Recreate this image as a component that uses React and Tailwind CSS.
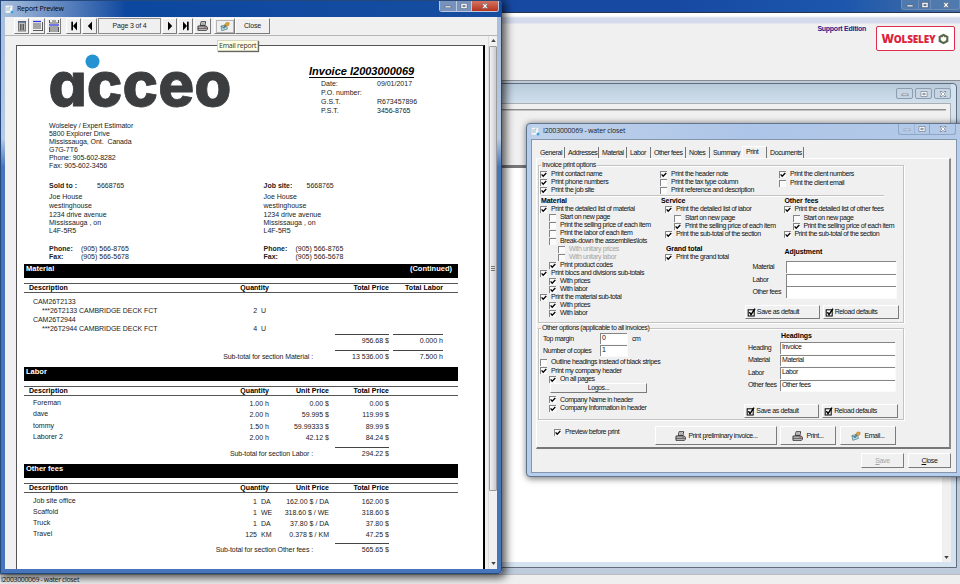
import { clsx } from 'clsx';

const material = [
  { label: 'Print the detailed list of material', on: true },
  { label: 'Start on new page', level: 1 },
  { label: 'Print the selling price of each item', level: 1 },
  { label: 'Print the labor of each item', level: 1 },
  { label: 'Break-down the assemblies\\lots', level: 1 },
  { label: 'With unitary prices', level: 2, disabled: true },
  { label: 'With unitary labor', level: 2, disabled: true },
  { label: 'Print product codes', level: 1, on: true },
  { label: 'Print blocs and divisions sub-totals', on: true },
  { label: 'With prices', level: 1, on: true },
  { label: 'With labor', level: 1, on: true },
  { label: 'Print the material sub-total', on: true },
  { label: 'With prices', level: 1, on: true },
  { label: 'With labor', level: 1, on: true },
];

const tabs = [
  ['General', 'w-[28px]'],
  ['Addresses', 'w-[34px]'],
  ['Material', 'w-[28px]'],
  ['Labor', 'w-[24px]'],
  ['Other fees', 'w-[35px]'],
  ['Notes', 'w-[24px]'],
  ['Summary', 'w-[32px]'],
  ['Print', 'w-[25px]'],
  ['Documents', 'w-[37px]'],
];

const labor = [
  ['Foreman', '1.00 h', '0.00 $', '0.00 $'],
  ['dave', '2.00 h', '59.995 $', '119.99 $'],
  ['tommy', '1.50 h', '59.99333 $', '89.99 $'],
  ['Laborer 2', '2.00 h', '42.12 $', '84.24 $'],
];

const fees = [
  ['Job site office', '1', 'DA', '162.00 $ / DA', '162.00 $'],
  ['Scaffold', '1', 'WE', '318.60 $ / WE', '318.60 $'],
  ['Truck', '1', 'DA', '37.80 $ / DA', '37.80 $'],
  ['Travel', '125', 'KM', '0.378 $ / KM', '47.25 $'],
];

/* ── icons ── */

function PrinterIcon({ className }) {
  return (
    <svg viewBox="0 0 12 11" className={className}>
      <path d="M3.5 5 L4.5 0.7 H9.5 L8.7 5 Z" fill="#fff" stroke="#222" strokeWidth="0.9" />
      <path d="M5 2.2 H8.4 M4.7 3.6 H8" stroke="#444" strokeWidth="0.7" />
      <path d="M1 5.5 H10.2 L11.4 7 V9 L10.4 10.3 H1 Z" fill="#c9c9c9" stroke="#222" strokeWidth="0.9" />
      <path d="M1 8 H10.8" stroke="#222" strokeWidth="0.8" />
      <rect x="8" y="6.3" width="1.8" height="0.9" fill="#b03030" />
    </svg>
  );
}

function EmailIcon({ className }) {
  return (
    <svg viewBox="0 0 11 11" className={className}>
      <path d="M1 5 L7 3.6 L8.2 8.2 L2 10.2 Z" fill="#b9dbe2" stroke="#4d7f8c" strokeWidth="0.8" />
      <path d="M1.2 5.2 L5 7.3 L7 3.8" fill="none" stroke="#356a78" strokeWidth="0.8" />
      <path d="M4.5 4.5 L7 1 L10 1.4 L9.8 4 L6.7 5.4 Z" fill="#dfa23c" stroke="#976a20" strokeWidth="0.5" />
      <path d="M3.4 7.2 L6.4 4" stroke="#42798a" strokeWidth="1.2" />
    </svg>
  );
}

function AppIcon() {
  return (
    <svg viewBox="0 0 9 9" className="h-[9px] w-[9px] shrink-0">
      <rect x="0.4" y="0.4" width="7.2" height="7.6" rx="1" fill="#f4f8fb" stroke="#b9cddd" strokeWidth="0.6" />
      <path d="M2 2.2 V6 M4 2.2 H5.5 M4 2.2 V6" stroke="#8ba5b9" strokeWidth="0.8" />
      <circle cx="7" cy="7" r="1.5" fill="#35a5de" />
    </svg>
  );
}

function SheetIcon({ kind }) {
  return (
    <svg viewBox="0 0 12 12" className="h-[12px] w-[12px]" fill="none" stroke="#333" strokeWidth="1">
      {kind === 'page' && (
        <>
          <rect x="2.5" y="1.5" width="7" height="9.5" fill="#bbb" stroke="#777" />
          <path d="M4.5 4 V10 M6 4 V10 M7.5 4 V10" strokeWidth="0.7" />
          <path d="M2 2 H10" stroke="#34498c" />
        </>
      )}
      {kind === 'wide' && (
        <>
          <path d="M1 1.5 H9" stroke="#2a35e0" strokeWidth="1.3" />
          <path d="M1 4 H9 M1 6 H9 M1 8 H9 M1 10.5 H11 M10.5 2 V11" strokeWidth="0.8" />
        </>
      )}
      {kind === 'break' && (
        <>
          <path d="M1.5 0 V3 H10.5 V0 M4 1 H8" strokeWidth="0.8" />
          <path d="M1 5 H11" stroke="#2a35e0" strokeWidth="1.3" />
          <path d="M1.5 7 H10.5 M1.5 9 H10.5 M1.5 11 H10.5 M1.5 7 V12 M10.5 7 V12" strokeWidth="0.8" />
        </>
      )}
    </svg>
  );
}

function NavIcon({ dir, bar }) {
  return (
    <svg viewBox="0 0 10 10" className={clsx('h-[10px] w-[10px]', dir === 'left' && '-scale-x-100')}>
      <path d={bar ? 'M2 0.5 L6 5 L2 9.5 Z' : 'M3 0.5 L7.2 5 L3 9.5 Z'} fill="#000" />
      {bar && <rect x="6" y="0.7" width="1.7" height="8.6" fill="#000" />}
    </svg>
  );
}

function TickBoxIcon() {
  return (
    <svg viewBox="0 0 9 9" className="h-[9px] w-[9px]">
      <rect x="1.2" y="1.8" width="6" height="6.2" fill="#fff" stroke="#111" strokeWidth="1.1" />
      <path d="M2.4 4.2 L4 6.6 L8 0.6" fill="none" stroke="#000" strokeWidth="1.5" />
    </svg>
  );
}

function CaptionGlyph({ kind }) {
  return (
    <svg viewBox="0 0 10 8" className="h-[8px] w-[10px]" stroke="#4e5664" strokeWidth="0.5" fill="#fff">
      {kind === 'min' && <rect x="2" y="4" width="6" height="1.8" />}
      {kind === 'max' && <path fillRule="evenodd" d="M2 1.5 H8 V6.5 H2 Z M3.8 3.3 H6.2 V4.8 H3.8 Z" />}
      {kind === 'close' && <path d="M2 1.5 H4 L5 2.8 L6 1.5 H8 L6.2 4 L8 6.5 H6 L5 5.2 L4 6.5 H2 L3.8 4 Z" />}
    </svg>
  );
}

/* ── form parts ── */

function Check({ label, on, level = 0, disabled, className }) {
  return (
    <div
      className={clsx(
        'flex h-[8px] items-center whitespace-nowrap',
        level === 1 && 'pl-[9px]',
        level === 2 && 'pl-[18px]',
        className,
      )}
    >
      <span className="mr-[4px] block h-[7px] w-[7px] shrink-0 border-t border-l border-[#858585] bg-[#fbfbfb]">
        {on && (
          <svg viewBox="0 0 6 6" className="block h-[6px] w-[6px]">
            <path d="M0.6 2.3 L2.2 4.2 L5.3 1" fill="none" stroke="#000" strokeWidth="1.3" />
          </svg>
        )}
      </span>
      <span className={clsx(disabled && 'text-[#a5a5a5]')}>{label}</span>
    </div>
  );
}

function Field({ label, value, labelClass, boxClass }) {
  return (
    <div className="flex items-center">
      <span className={clsx('shrink-0', labelClass)}>{label}</span>
      <span
        className={clsx(
          'block shrink-0 border-t-[1.5px] border-l-[1.5px] border-[#858585] bg-white pl-[1px] leading-[8px] shadow-[1px_1px_0_#fafafa]',
          boxClass,
        )}
      >
        {value}
      </span>
    </div>
  );
}

function Button({ children, className }) {
  return (
    <button
      className={clsx(
        'flex shrink-0 items-center justify-center border-t border-r-[1.5px] border-b-[1.5px] border-l border-t-white border-r-[#7b7b7b] border-b-[#7b7b7b] border-l-white bg-[#f0f0f0]',
        className,
      )}
    >
      {children}
    </button>
  );
}

function DefaultButtons({ className }) {
  return (
    <div className={clsx('flex gap-[3px]', className)}>
      <Button className="h-[14px] w-[75px] gap-[1px] pr-[18px]">
        <TickBoxIcon />
        Save as default
      </Button>
      <Button className="h-[14px] w-[76px] gap-[1px] pr-[19px]">
        <TickBoxIcon />
        Reload defaults
      </Button>
    </div>
  );
}

/* ── main application window ── */

function MainWindow() {
  return (
    <div className="flex h-full flex-col">
      <div className="flex h-[13px] shrink-0 justify-end border-b border-[#26354f] bg-linear-to-r from-[#1749a3] from-70% via-[#1c57ad] via-88% to-[#466fa3]">
        <div className="flex h-[10px] w-[59px] rounded-b-[3px] border border-t-0 border-[#6d8db7] bg-[#5079ad]">
          <span className="flex w-[17px] items-center justify-center border-r border-[#6d8db7]"><CaptionGlyph kind="min" /></span>
          <span className="flex w-[12px] items-center justify-center border-r border-[#6d8db7]"><CaptionGlyph kind="max" /></span>
          <span className="flex flex-1 items-center justify-center pl-[2px]"><CaptionGlyph kind="close" /></span>
        </div>
      </div>
      <div className="h-[11px] shrink-0 border-b border-[#e3e5ea] bg-linear-to-b from-white from-30% to-[#d4dbed] to-50%" />
      <div className="flex h-[57px] shrink-0 justify-end border-b border-[#8a8d91] bg-[#f0f0f0]">
        <span className="mt-[1px] mr-[10px] text-[7px] leading-[8px] font-bold tracking-[-0.26px] text-[#21218f]">Support Edition</span>
        <div className="mt-[2px] mr-[5px] flex h-[25px] w-[79px] items-center justify-center gap-[3px] rounded-[2px] border-[1.5px] border-[#e12c4d] bg-white">
          <span className="font-['Open_Sans',sans-serif] text-[10px] leading-[10px] font-extrabold tracking-[-0.2px] text-[#dc2440]">
            <span className="text-[12px]">W</span>OLSELEY
          </span>
          <svg viewBox="0 0 12 12" className="h-[12px] w-[11px] shrink-0">
            <path d="M6 0.3 L11.3 3 V9 L6 11.7 L0.7 9 V3 Z" fill="#59674a" />
            <path d="M6 2.8 L7.2 4.2 L9 4.2 V7 L7.4 8.4 L6 9 L4.6 8.4 L3 7 V4.2 L4.8 4.2 Z" fill="#fff" />
          </svg>
        </div>
      </div>
      <div className="h-[493px] shrink-0 bg-[#bdcbdb] pt-[2px] pr-[3px]">
        <div className="flex h-[485px] flex-col rounded-tr-[4px] border border-[#5f6c7b] bg-[#d5e2ef] pr-[5px] pb-[5px]">
          <div className="flex h-[19px] shrink-0 justify-end gap-[2px] bg-linear-to-b from-[#b8cada] to-[#d2e0ed] pt-[4px] pr-0">
            {['min', 'max', 'close'].map((kind) => (
              <span key={kind} className="flex h-[11px] w-[17px] items-center justify-center rounded-[2px] border border-[#8d9dae] bg-[#c6d5e3]">
                <CaptionGlyph kind={kind} />
              </span>
            ))}
          </div>
          <div className="h-[62px] shrink-0 border border-b-0 border-[#a9afb5] bg-[#f0f0f0] pt-[5px] pr-[4px]">
            <div className="h-[2px] border-t border-[#8c8c8c] bg-[#c4c4c4]" />
          </div>
          <div className="flex flex-1 border-t-[3px] border-[#777] bg-white">
            <div className="flex-1" />
            <div className="flex w-[9px] items-end justify-center bg-[#f0f0f0] pb-[3px]">
              <svg viewBox="0 0 6 4" className="h-[3px] w-[5px]"><path d="M0 0 H6 L3 4 Z" fill="#444" /></svg>
            </div>
          </div>
        </div>
      </div>
      <div className="flex-1 border-t border-[#b9bcc0] bg-[#efefef] pl-[1px] font-['Open_Sans',sans-serif] text-[7px] leading-[9px] tracking-[-0.36px]">
        I2003000069 - water closet
      </div>
    </div>
  );
}

/* ── report ── */

function Letterhead() {
  return (
    <div className="flex h-[76px]">
      <svg viewBox="0 0 190 76" className="ml-[30px] h-[76px] w-[190px] overflow-visible">
        <text
          x="1.5"
          y="60"
          textLength="183"
          lengthAdjust="spacingAndGlyphs"
          className="fill-[#3b3d3f] stroke-[#3b3d3f] font-['Inter',sans-serif] text-[61px] font-extrabold [font-feature-settings:'cv11']"
          strokeWidth="0.8"
        >
          acceo
        </text>
        <circle cx="45.5" cy="15.5" r="7" fill="#2593d2" />
      </svg>
      <div className="ml-[72px] pt-[20px]">
        <div className="w-[105px] border-b border-black text-[11px] leading-[11px] font-bold whitespace-nowrap text-black italic">
          Invoice I2003000069
        </div>
        <div className="grid grid-cols-[56px_auto] pt-[1px] pl-[12px] leading-[9px] whitespace-nowrap">
          <span>Date:</span><span>09/01/2017</span>
          <span>P.O. number:</span><span />
          <span>G.S.T.</span><span>R673457896</span>
          <span>P.S.T.</span><span>3456-8765</span>
        </div>
      </div>
    </div>
  );
}

function Party({ title, codeClass }) {
  return (
    <div className="w-[214.5px] leading-[8.1px]">
      <div className="flex"><b className={codeClass}>{title}</b>5668765</div>
      <div className="mt-[3px]">Joe House</div>
      <div className="mt-[1px]">westinghouse</div>
      <div>1234 drive avenue</div>
      <div>Mississauga , on</div>
      <div>L4F-5R5</div>
      <div className="mt-[10px] flex"><b className="w-[32px]">Phone:</b>(905) 566-8765</div>
      <div className="mt-[0.5px] flex"><b className="w-[32px]">Fax:</b>(905) 566-5678</div>
    </div>
  );
}

function SectionBar({ title, note }) {
  return (
    <div className="flex h-[14px] shrink-0 justify-between bg-black pt-[1px] pr-[6px] pl-[2px] text-[7.5px] leading-[8px] font-bold text-white">
      <span>{title}</span>
      <span>{note}</span>
    </div>
  );
}

function Row({ desc, qty, unit, price, total, extra, className, numClass }) {
  return (
    <div className={clsx('flex whitespace-nowrap', className)}>
      <span className="w-[190px]">{desc}</span>
      <span className={clsx('flex w-[55px] justify-end', numClass)}>
        {qty}
        {unit && <span className="w-[12px] shrink-0 pl-[4px]">{unit}</span>}
      </span>
      <span className={clsx('w-[60px] text-right', numClass)}>{price}</span>
      <span className={clsx('w-[60px] text-right', numClass)}>{total}</span>
      <span className="w-[54px] text-right">{extra}</span>
    </div>
  );
}

function HeadRow(props) {
  return (
    <div className="mt-[5px] h-[10px] border-y border-[#555] pl-[5px] leading-[8px] font-bold tracking-[0.03px] text-black">
      <Row {...props} className="-mr-[5px] [&>span:first-child]:w-[185px]" />
    </div>
  );
}

function Rules({ two }) {
  return (
    <div className="flex gap-[4px] pl-[311px]">
      <div className="h-px w-[54px] bg-[#444]" />
      {two && <div className="h-px w-[50px] bg-[#444]" />}
    </div>
  );
}

function SubTotal({ label, total, extra, className }) {
  return (
    <div className={clsx('flex leading-[8px]', className)}>
      <span className="w-[289px] text-right tracking-[-0.1px]">{label}</span>
      <span className="w-[76px] text-right">{total}</span>
      <span className="w-[54px] text-right">{extra}</span>
    </div>
  );
}

function ReportPage() {
  return (
    <div className="flex h-[524px] w-[469px] flex-col border-t border-r-2 border-l border-t-[#555] border-r-black border-l-[#555] bg-white text-[7px] text-[#222]">
      <Letterhead />
      <div className="pl-[32px] leading-[8.05px] tracking-[-0.06px]">
        <div>Wolseley / Expert Estimator</div>
        <div>5800 Explorer Drive</div>
        <div>Mississauga, Ont.&nbsp; Canada</div>
        <div>G7G-7T6</div>
        <div>Phone: 905-602-8282</div>
        <div>Fax: 905-602-3456</div>
      </div>
      <div className="flex pt-[12px] pl-[32px]">
        <Party title="Sold to :" codeClass="w-[48px]" />
        <Party title="Job site:" codeClass="w-[43px]" />
      </div>

      <div className="mt-[2px] ml-[7px] flex w-[434px] flex-col">
        <SectionBar title="Material" note="(Continued)" />
        <HeadRow desc="Description" qty="Quantity" total="Total Price" extra="Total Labor" />
        <div className="h-[41px] pt-[4px] leading-[9.2px] tracking-[-0.06px]">
          <div className="pl-[9px]">CAM26T2133</div>
          <Row desc={<span className="pl-[18px]">***26T2133 CAMBRIDGE DECK FCT</span>} qty="2" unit="U" />
          <div className="pl-[9px]">CAM26T2944</div>
          <Row desc={<span className="pl-[18px]">***26T2944 CAMBRIDGE DECK FCT</span>} qty="4" unit="U" />
        </div>
        <Rules two />
        <SubTotal total="956.68 $" extra="0.000 h" className="mt-[2px] h-[13px]" />
        <Rules two />
        <SubTotal label="Sub-total for section Material :" total="13 536.00 $" extra="7.500 h" className="mt-[2px] h-[14px]" />

        <SectionBar title="Labor" />
        <HeadRow desc="Description" qty="Quantity" price="Unit Price" total="Total Price" />
        <div className="h-[51px] pt-[1px] leading-[11.5px]">
          {labor.map(([name, qty, price, total]) => (
            <Row key={name} desc={<span className="pl-[9px]">{name}</span>} qty={qty} price={price} total={total} numClass="pt-[1px] -mb-[1px]" />
          ))}
        </div>
        <Rules />
        <SubTotal label="Sub-total for section Labor :" total="294.22 $" className="mt-[2px] h-[14px]" />

        <SectionBar title="Other fees" />
        <HeadRow desc="Description" qty="Quantity" price="Unit Price" total="Total Price" />
        <div className="h-[50px] pt-[2px] leading-[11.3px]">
          {fees.map(([name, qty, unit, price, total]) => (
            <Row key={name} desc={<span className="pl-[9px]">{name}</span>} qty={qty} unit={unit} price={price} total={total} numClass="pt-[1px] -mb-[1px]" />
          ))}
        </div>
        <Rules />
        <SubTotal label="Sub-total for section Other fees :" total="565.65 $" className="mt-[2px]" />
      </div>
    </div>
  );
}

function ReportWindow() {
  const tool = 'h-[16px] w-[15px]';
  return (
    <div className="absolute top-0 left-0 flex h-[574px] w-[502px] flex-col rounded-r-[4px] border border-[#24477c] bg-linear-to-b from-[#a9bfdc] from-5% via-[#b7cae4] via-24% to-[#4775bb] to-29% shadow-[2px_2px_8px_2px_rgba(0,0,0,0.65)]">
      <div className="flex h-[16px] shrink-0 justify-between rounded-tr-[3px] bg-linear-to-r from-[#a9bfdb] via-[#0c489f] via-25% to-[#164da0] pr-[2px] pl-[4px]">
        <div className="flex items-center gap-[3px] font-['Open_Sans',sans-serif] text-[7px] tracking-[-0.2px] text-black">
          <AppIcon />
          Report Preview
        </div>
        <div className="flex h-[11px] w-[60px] overflow-hidden rounded-b-[3px] border border-t-0 border-[#bcc9dc]">
          <span className="flex w-[17px] items-center justify-center border-r border-[#bcc9dc] bg-[#7692bd]"><CaptionGlyph kind="min" /></span>
          <span className="flex w-[15px] items-center justify-center border-r border-[#bcc9dc] bg-[#7692bd]"><CaptionGlyph kind="max" /></span>
          <span className="flex flex-1 items-center justify-center bg-linear-to-b from-[#d5735f] to-[#b6301b]"><CaptionGlyph kind="close" /></span>
        </div>
      </div>
      <div className="mx-[4px] mb-[4px] flex h-[552px] flex-col bg-[#f0f0f0]">
        <div className="flex h-[19px] shrink-0 items-center border-b border-[#b5b5b5] pl-[9px] text-[7px] tracking-[-0.15px]">
          <div className="flex gap-px">
            <Button className={tool}><SheetIcon kind="page" /></Button>
            <Button className={tool}><SheetIcon kind="wide" /></Button>
            <Button className={tool}><SheetIcon kind="break" /></Button>
          </div>
          <div className="ml-[5px] flex gap-px">
            <Button className={tool}><NavIcon dir="left" bar /></Button>
            <Button className={tool}><NavIcon dir="left" /></Button>
            <div className="flex h-[16px] w-[63px] items-center justify-center border border-t-[1.5px] border-[#8e8e8e] pt-px">Page 3 of 4</div>
            <Button className={tool}><NavIcon dir="right" /></Button>
            <Button className={tool}><NavIcon dir="right" bar /></Button>
          </div>
          <Button className="ml-px h-[16px] w-[17px]"><PrinterIcon className="h-[10px] w-[11px]" /></Button>
          <Button className="ml-[3px] h-[16px] w-[21px] border-t-[#666] border-l-[#666]">
            <span className="flex border border-[#b5b5b5] px-[3px]"><EmailIcon className="h-[11px] w-[10px]" /></span>
          </Button>
          <Button className="h-[16px] w-[35px] pt-px">Close</Button>
        </div>
        <div className="flex flex-1">
          <div className="w-[483px] shrink-0 pt-[9px] pl-[11px]">
            <ReportPage />
          </div>
          <div className="flex w-[9px] flex-col items-center justify-between border-l border-[#dcdcdc] bg-[#f1f1f1]">
            <svg viewBox="0 0 6 4" className="mt-[3px] h-[3px] w-[5px]"><path d="M0 4 H6 L3 0 Z" fill="#444" /></svg>
            <div className="mt-[4px] flex h-[445px] w-full flex-col items-center justify-center gap-px rounded-[1px] border border-[#9b9b9b] bg-linear-to-r from-[#f2f2f2] to-[#c9cbcf]">
              <i className="h-px w-[4px] bg-[#777]" />
              <i className="h-px w-[4px] bg-[#777]" />
              <i className="h-px w-[4px] bg-[#777]" />
            </div>
            <div className="flex flex-1 items-end pb-[4px]">
              <svg viewBox="0 0 6 4" className="h-[3px] w-[5px]"><path d="M0 0 H6 L3 4 Z" fill="#444" /></svg>
            </div>
          </div>
        </div>
      </div>
      {/* toolbar tooltip */}
      <div className="absolute top-[39px] left-[216px] h-[11px] border border-[#d5d5c0] bg-[#ffffe1] px-[1px] font-['Open_Sans',sans-serif] text-[7px] leading-[10px] tracking-[-0.25px] whitespace-nowrap text-[#333] shadow-[1px_1px_1px_#666]">
        Email report
      </div>
    </div>
  );
}

/* ── print options dialog ── */

function Group({ title, className, children }) {
  return (
    <div className={clsx('w-[366px] border border-[#c3c3c3] shadow-[inset_1px_1px_0_#fff,1px_1px_0_#fff]', className)}>
      <div className="-mt-[5px] ml-[2px] h-[8px] w-fit bg-[#f0f0f0] px-[1px]">{title}</div>
      {children}
    </div>
  );
}

function Heading({ className, children }) {
  return <div className={clsx('h-[8px] font-bold tracking-[-0.08px] text-black', className)}>{children}</div>;
}

function InvoiceOptions() {
  return (
    <Group title="Invoice print options" className="h-[158px]">
      <div className="flex h-[26px] pl-[1px]">
        <div className="w-[120px] pt-[1px]">
          <Check label="Print contact name" on />
          <Check label="Print phone numbers" on />
          <Check label="Print the job site" on />
        </div>
        <div className="w-[119px] pt-[1px]">
          <Check label="Print the header note" on />
          <Check label="Print the tax type column" />
          <Check label="Print reference and description" />
        </div>
        <div className="pt-[1px]">
          <Check label="Print the client numbers" on />
          <Check label="Print the client email" className="mt-px" />
        </div>
      </div>
      <div className="ml-[2px] h-[2px] w-[343px] border-t border-[#c3c3c3] bg-white" />
      <div className="flex pl-[1px]">
        <div className="w-[121px]">
          <Heading className="pl-px">Material</Heading>
          {material.map((item, i) => (
            <Check key={i} {...item} />
          ))}
        </div>
        <div className="w-[122px]">
          <Heading>Service</Heading>
          <div className="pl-[4px]">
            <Check label="Print the detailed list of labor" on />
            <Check label="Start on new page" level={1} className="mt-px" />
            <Check label="Print the selling price of each item" level={1} on />
            <Check label="Print the sub-total of the section" on />
            <Heading className="mt-[7px] pl-px">Grand total</Heading>
            <Check label="Print the grand total" on />
          </div>
        </div>
        <div className="pl-[0.5px]">
          <Heading className="pl-[1px]">Other fees</Heading>
          <Check label="Print the detailed list of other fees" on />
          <Check label="Start on new page" level={1} className="mt-px" />
          <Check label="Print the selling price of each item" level={1} on />
          <Check label="Print the sub-total of the section" on />
          <Heading className="mt-[10px] pl-[1px]">Adjustment</Heading>
          <div className="mt-[5px] -ml-[31px] flex flex-col gap-[0.5px]">
            <Field label="Material" labelClass="w-[33px]" boxClass="h-[12px] w-[110px]" />
            <Field label="Labor" labelClass="w-[33px]" boxClass="h-[12px] w-[110px]" />
            <Field label="Other fees" labelClass="w-[33px]" boxClass="h-[12px] w-[110px]" />
          </div>
          <DefaultButtons className="mt-[7px] -ml-[39px]" />
        </div>
      </div>
    </Group>
  );
}

function OtherOptions() {
  return (
    <Group title="Other options (applicable to all invoices)" className="mt-[5px] h-[92px]">
      <div className="flex">
        <div className="w-[205px] pl-[1px]">
          <div className="mt-px ml-[3px] flex items-center">
            <Field label="Top margin" value="0" labelClass="w-[57px]" boxClass="h-[11px] w-[27px]" />
            <span className="ml-[5px]">cm</span>
          </div>
          <div className="mt-px ml-[3px]">
            <Field label="Number of copies" value="1" labelClass="w-[57px]" boxClass="h-[11px] w-[27px]" />
          </div>
          <Check label="Outline headings instead of black stripes" className="mt-[2px]" />
          <Check label="Print my company header" on className="mt-[0.5px]" />
          <Check label="On all pages" level={1} on className="mt-[0.5px]" />
          <Button className="ml-[10px] h-[9.5px] w-[97px] leading-[7px]">Logos...</Button>
          <Check label="Company Name in header" level={1} on className="mt-[3px]" />
          <Check label="Company Information in header" level={1} on className="mt-[0.5px]" />
        </div>
        <div>
          <Heading className="ml-[37px]">Headings</Heading>
          <div className="mt-[2px] ml-[4px] flex flex-col gap-[1px]">
            <Field label="Heading" value="Invoice" labelClass="w-[32px]" boxClass="h-[11.5px] w-[115px]" />
            <Field label="Material" value="Material" labelClass="w-[32px]" boxClass="h-[11.5px] w-[115px]" />
            <Field label="Labor" value="Labor" labelClass="w-[32px]" boxClass="h-[11.5px] w-[115px]" />
            <Field label="Other fees" value="Other fees" labelClass="w-[32px]" boxClass="h-[11.5px] w-[115px]" />
          </div>
          <DefaultButtons className="mt-[13px]" />
        </div>
      </div>
    </Group>
  );
}

function PrintDialog() {
  return (
    <div className="absolute top-[123px] left-[526px] flex h-[354px] w-[438px] flex-col rounded-[4px] border border-[#62738f] bg-[#b7cdec] pl-[4px] shadow-[1px_1px_6px_1px_rgba(0,0,0,0.5)]">
      <div className="flex h-[15px] shrink-0 justify-between rounded-t-[3px] bg-linear-to-r from-[#bfd1ea] via-[#adc5e8] to-[#b4cae8] pr-[7px]">
        <div className="flex items-center gap-[3px] font-['Open_Sans',sans-serif] text-[7px] tracking-[-0.2px] text-[#1c1c1c]">
          <AppIcon />
          I2003000069 - water closet
        </div>
        <div className="flex h-[11px] w-[58px] rounded-b-[3px] border border-t-0 border-[#8fa5c5]">
          <span className="flex w-[16px] items-center justify-center border-r border-[#8fa5c5] opacity-50"><CaptionGlyph kind="min" /></span>
          <span className="flex w-[15px] items-center justify-center border-r border-[#8fa5c5]"><CaptionGlyph kind="max" /></span>
          <span className="flex flex-1 items-center justify-center"><CaptionGlyph kind="close" /></span>
        </div>
      </div>
      <div className="flex h-[334px] w-[426px] flex-col border border-[#8496ae] bg-[#f0f0f0] text-[7px] leading-[8px] tracking-[-0.4px] whitespace-nowrap text-[#111]">
        <div className="flex h-[18px] shrink-0 items-end pl-[5px]">
          {tabs.map(([name, width]) => (
            <div
              key={name}
              className={clsx(
                'shrink-0',
                width,
                name === 'Print'
                  ? 'h-[12px] rounded-t-[1px] border-t border-r-[1.5px] border-l border-t-white border-r-[#777] border-l-white pt-px pl-[3px]'
                  : 'h-[11px] pt-[2px] pl-[3px]',
                name !== 'Print' && name !== 'Summary' && 'border-r-[1.5px] border-[#777]',
              )}
            >
              {name}
            </div>
          ))}
        </div>
        <div className="ml-[4px] flex h-[291px] w-[415px] flex-col border-t border-r-2 border-b-2 border-l border-t-white border-r-[#8a8a8a] border-b-[#777] border-l-white pt-[6px] pl-[1px]">
          <InvoiceOptions />
          <OtherOptions />
          <div className="flex pt-[6px] pl-[16px]">
            <Check label="Preview before print" on className="mt-[2px] w-[101px]" />
            <Button className="h-[19px] w-[122px] gap-[3px]">
              <PrinterIcon className="h-[10px] w-[11px]" />
              <span>Print <u>p</u>reliminary invoice...</span>
            </Button>
            <Button className="ml-[3px] h-[19px] w-[56px] gap-[3px] border-t-[#777] border-l-[#777]">
              <PrinterIcon className="h-[10px] w-[11px]" />
              Print...
            </Button>
            <Button className="ml-[4px] h-[19px] w-[56px] gap-[3px]">
              <EmailIcon className="h-[10px] w-[10px]" />
              Email...
            </Button>
          </div>
        </div>
        <div className="mt-[4px] flex justify-end gap-[4px] pr-[5px]">
          <Button className="h-[15px] w-[43px] text-[#a5a5a5]"><span><u>S</u>ave</span></Button>
          <Button className="h-[15px] w-[43px]"><span><u>C</u>lose</span></Button>
        </div>
      </div>
    </div>
  );
}

export default function App() {
  return (
    <div className="relative h-[584px] w-[960px] overflow-hidden bg-[#f0f0f0] font-['Liberation_Sans',Arial,sans-serif] text-[#222]">
      <MainWindow />
      <ReportWindow />
      <PrintDialog />
    </div>
  );
}
